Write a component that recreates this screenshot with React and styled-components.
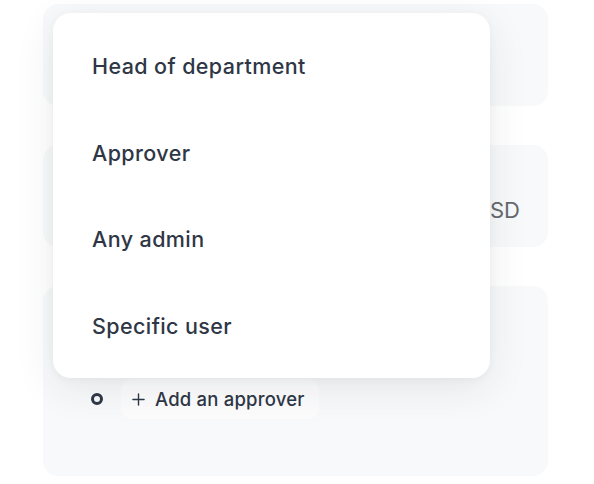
import React from "react";
import styled, { createGlobalStyle } from "styled-components";

const GlobalStyle = createGlobalStyle`
  html, body {
    margin: 0;
    padding: 0;
    background: #ffffff;
    font-family: Inter, "Noto Sans", sans-serif;
  }
`;

const Page = styled.div`
  position: relative;
  width: 594px;
  height: 484px;
  padding: 4px 0 0 43px;
  box-sizing: border-box;
  display: flex;
  flex-direction: column;
  gap: 39px;
`;

const Card = styled.div`
  width: 505px;
  height: ${(p) => p.$h}px;
  background: #f8f9fa;
  border-radius: 15px;
  box-sizing: border-box;
  display: flex;
  flex-direction: column;
`;

const Currency = styled.div`
  margin-top: auto;
  margin-bottom: 24px;
  align-self: flex-end;
  padding-right: 28px;
  font-size: 22px;
  color: #65686d;
`;

const ApproverRow = styled.div`
  display: flex;
  align-items: center;
  gap: 18px;
  padding: 93px 0 0 48px;
`;

const Dot = styled.span`
  width: 6px;
  height: 6px;
  border: 3px solid #2f3746;
  border-radius: 50%;
`;

const AddButton = styled.button`
  display: flex;
  align-items: center;
  gap: 10px;
  height: 40px;
  padding: 0 14px 0 11px;
  border: none;
  border-radius: 12px;
  background: #fcfcfd;
  font-family: inherit;
  font-size: 18.5px;
  font-weight: 500;
  letter-spacing: 0.2px;
  color: #2f3746;
`;

const Menu = styled.ul`
  position: absolute;
  left: 53px;
  top: 13px;
  width: 437px;
  height: 365px;
  margin: 0;
  padding: 10px 0 0;
  box-sizing: border-box;
  list-style: none;
  background: #ffffff;
  border-radius: 18px;
  box-shadow: 0 10px 40px rgba(30, 40, 60, 0.09), 0 2px 8px rgba(30, 40, 60, 0.04);
`;

const MenuItem = styled.li`
  height: 86.5px;
  display: flex;
  align-items: center;
  padding-left: 39px;
  font-size: 21.5px;
  font-weight: 500;
  letter-spacing: 0.4px;
  color: #2f3746;
`;

export default function App() {
  const options = ["Head of department", "Approver", "Any admin", "Specific user"];
  return (
    <>
      <GlobalStyle />
      <Page>
        <Card $h={102} />
        <Card $h={102}>
          <Currency>USD</Currency>
        </Card>
        <Card $h={190}>
          <ApproverRow>
            <Dot />
            <AddButton>
              <svg width="13" height="13" viewBox="0 0 14 14" fill="none">
                <path d="M7 1v12M1 7h12" stroke="#2f3746" strokeWidth="1.5" strokeLinecap="round" />
              </svg>
              Add an approver
            </AddButton>
          </ApproverRow>
        </Card>
        <Menu>
          {options.map((o) => (
            <MenuItem key={o}>{o}</MenuItem>
          ))}
        </Menu>
      </Page>
    </>
  );
}
